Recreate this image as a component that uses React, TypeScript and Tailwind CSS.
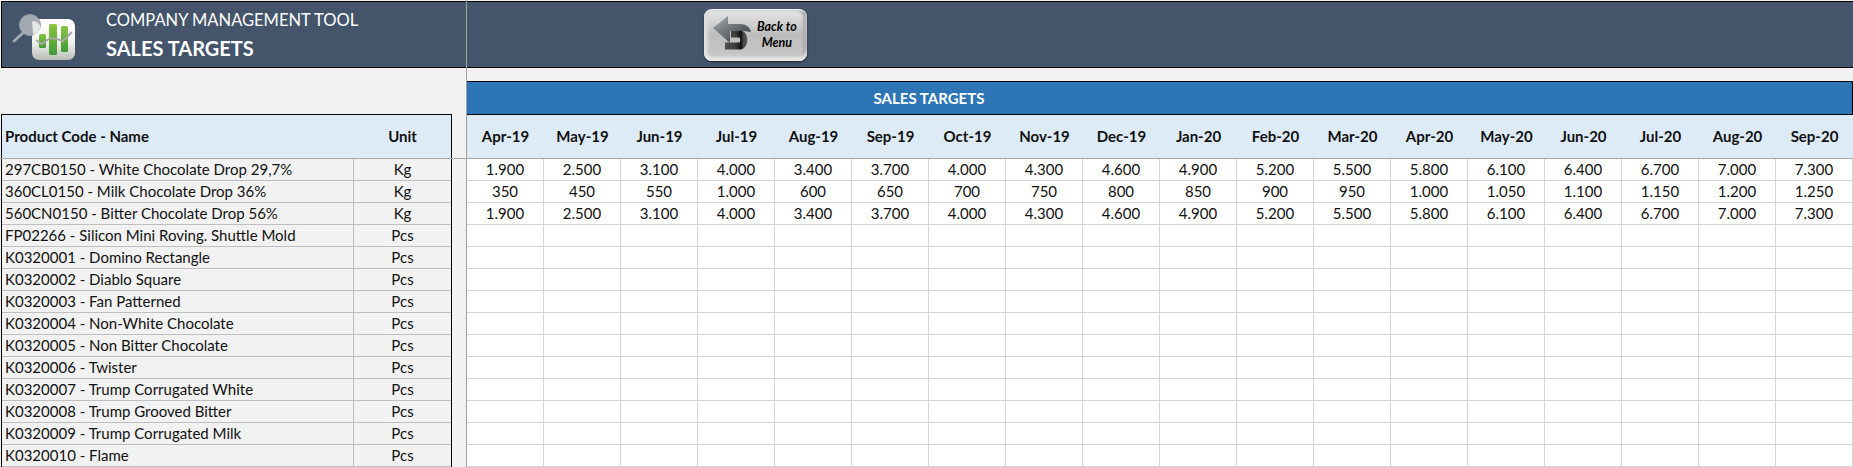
const months = ["Apr-19","May-19","Jun-19","Jul-19","Aug-19","Sep-19","Oct-19","Nov-19","Dec-19","Jan-20","Feb-20","Mar-20","Apr-20","May-20","Jun-20","Jul-20","Aug-20","Sep-20"];
const r1 = ["1.900","2.500","3.100","4.000","3.400","3.700","4.000","4.300","4.600","4.900","5.200","5.500","5.800","6.100","6.400","6.700","7.000","7.300"];
const r2 = ["350","450","550","1.000","600","650","700","750","800","850","900","950","1.000","1.050","1.100","1.150","1.200","1.250"];
const products: [string, string][] = [
  ["297CB0150 - White Chocolate Drop 29,7%","Kg"],
  ["360CL0150 - Milk Chocolate Drop 36%","Kg"],
  ["560CN0150 - Bitter Chocolate Drop 56%","Kg"],
  ["FP02266 - Silicon Mini Roving. Shuttle Mold","Pcs"],
  ["K0320001 - Domino Rectangle","Pcs"],
  ["K0320002 - Diablo Square","Pcs"],
  ["K0320003 - Fan Patterned","Pcs"],
  ["K0320004 - Non-White Chocolate","Pcs"],
  ["K0320005 - Non Bitter Chocolate","Pcs"],
  ["K0320006 - Twister","Pcs"],
  ["K0320007 - Trump Corrugated White","Pcs"],
  ["K0320008 - Trump Grooved Bitter","Pcs"],
  ["K0320009 - Trump Corrugated Milk","Pcs"],
  ["K0320010 - Flame","Pcs"],
];
const rows = [r1, r2, r1];

function Logo() {
  return (
    <svg width="80" height="62" viewBox="0 0 80 62" className="ml-[7px] shrink-0">
      <defs>
        <linearGradient id="tile" x1="0" y1="0" x2="0" y2="1">
          <stop offset="0" stopColor="#ffffff" />
          <stop offset="0.55" stopColor="#f2f4f0" />
          <stop offset="1" stopColor="#b9bdb8" />
        </linearGradient>
        <linearGradient id="bar" x1="0" y1="0" x2="0" y2="1">
          <stop offset="0" stopColor="#8cc63f" />
          <stop offset="1" stopColor="#3f9a3a" />
        </linearGradient>
      </defs>
      <rect x="23" y="15" width="43" height="41" rx="7" fill="url(#tile)" />
      <rect x="30" y="30" width="7" height="14" rx="1.5" fill="url(#bar)" />
      <rect x="40" y="20" width="8" height="31" rx="1.5" fill="url(#bar)" />
      <rect x="52" y="22" width="7" height="26" rx="1.5" fill="url(#bar)" />
      <path d="M27 36l6 4 8-6 7 1 6 2 9-9" fill="none" stroke="#a5aaa6" strokeWidth="2" />
      <path d="M5 37L15 28" stroke="#a7acb3" strokeWidth="2.6" strokeLinecap="round" />
      <circle cx="21" cy="21" r="10.5" fill="#a9aeb6" fillOpacity="0.95" stroke="#9aa0a8" strokeWidth="1" />
      <path d="M23 17a10.5 10.5 0 0 1 8.5 5.5a10.5 10.5 0 0 1-7 9z" fill="#eef0ee" fillOpacity="0.85" />
    </svg>
  );
}

function BackArrow() {
  return (
    <svg width="42" height="44" viewBox="0 0 42 44" className="shrink-0">
      <defs>
        <linearGradient id="head" x1="0" y1="0" x2="1" y2="1">
          <stop offset="0" stopColor="#a8adb0" />
          <stop offset="0.6" stopColor="#5d6367" />
          <stop offset="1" stopColor="#2a2c2e" />
        </linearGradient>
        <linearGradient id="tail" x1="0" y1="0" x2="1" y2="0">
          <stop offset="0" stopColor="#4e5052" />
          <stop offset="0.6" stopColor="#3a3a3a" />
          <stop offset="0.85" stopColor="#0d0d0d" />
          <stop offset="1" stopColor="#4d4d4d" />
        </linearGradient>
      </defs>
      <path d="M19 21H28C33 21 33 33 28 33H13" fill="none" stroke="url(#tail)" strokeWidth="7" />
      <path d="M1 15L16 3V11H28C34 11 38 14 39 19C35 18 32 18 28 18H18V30z" fill="url(#head)" />
    </svg>
  );
}

export default function App() {
  return (
    <div className="flex h-[467px] w-[1853px] overflow-hidden bg-[#f2f2f2] text-[15px] leading-none text-[#111] [font-family:Lato,sans-serif]">
      {/* Frozen left pane */}
      <div className="flex w-[467px] shrink-0 flex-col border-r border-[#a0a0a0]">
        <div className="h-[158px] shrink-0 pl-px pt-px">
          <div className="flex h-[67px] items-center border-y border-l border-black bg-[#44546a] text-white">
            <Logo />
            <div className="ml-[17px] flex flex-col">
              <span className="text-[16.5px] leading-[20px]">COMPANY MANAGEMENT TOOL</span>
              <span className="mt-[7px] text-[20px] leading-[22px] font-bold">SALES TARGETS</span>
            </div>
          </div>
          <div className="mt-[46px] flex h-[44px] w-[451px] border-x border-t border-black bg-[#ddebf7] font-bold">
            <div className="flex w-[352px] items-center pl-[3px]">Product Code - Name</div>
            <div className="flex flex-1 items-center justify-center">Unit</div>
          </div>
        </div>
        <div className="border-t border-[#a6a6a6] pl-px">
          {products.map(([name, unit]) => (
            <div key={name} className="flex h-[22px] w-[451px] border-x border-black">
              <div className="flex w-[352px] items-center border-r border-b border-[#bfbfbf] pl-[3px]">{name}</div>
              <div className="flex flex-1 items-center justify-center border-b border-[#bfbfbf]">{unit}</div>
            </div>
          ))}
        </div>
      </div>

      {/* Scrolling right pane */}
      <div className="flex min-w-0 flex-1 flex-col">
        <div className="h-[158px] shrink-0 pt-px">
          <div className="flex h-[67px] items-center border-y border-black bg-[#44546a] pl-[237px]">
            <div className="flex h-[52px] w-[103px] items-center gap-[3px] rounded-lg border-t border-[#f4f4f4] bg-gradient-to-b from-[#e6e6e6] via-[#bdbdbd] to-[#c9c9c9] pl-[8px] text-[12.5px] shadow-[inset_0_-4px_3px_#e8e8e8,inset_4px_0_3px_#dcdcdc,inset_-4px_0_3px_#a9a9a9,0_1px_2px_#222]">
              <BackArrow />
              <div className="flex flex-col items-center text-black italic font-bold leading-[16px]">
                <span>Back to</span>
                <span>Menu</span>
              </div>
            </div>
          </div>
          <div className="mt-[13px] flex h-[34px] items-center border-y border-r border-black bg-[#2e75b6] font-bold text-white">
            <div className="w-[924px] text-center">SALES TARGETS</div>
          </div>
          <div className="flex h-[43px] items-center bg-[#ddebf7] font-bold">
            {months.map((m, i) => (
              <div key={i} className="w-[77px] text-center">{m}</div>
            ))}
          </div>
        </div>
        <div className="border-t border-[#a6a6a6] bg-white">
          {Array.from({ length: 14 }).map((_, row) => (
            <div key={row} className="flex h-[22px]">
              {months.map((_, col) => (
                <div key={col} className="flex w-[77px] items-center justify-center border-r border-b border-[#d4d4d4]">
                  {rows[row]?.[col] ?? ""}
                </div>
              ))}
            </div>
          ))}
        </div>
      </div>
    </div>
  );
}
